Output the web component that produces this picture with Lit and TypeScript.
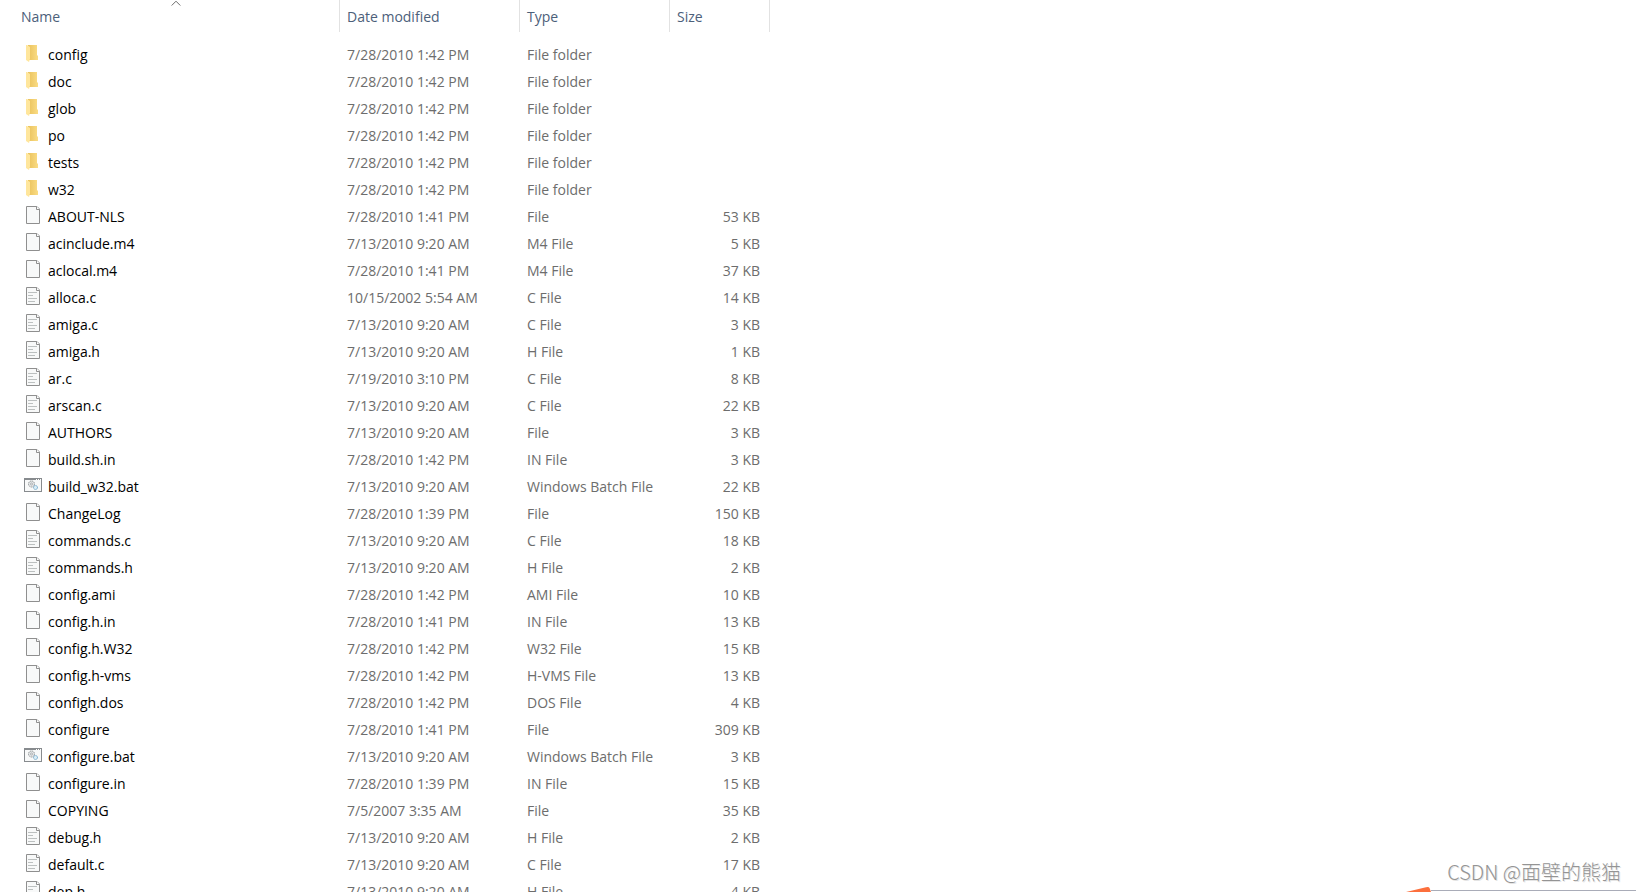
import { LitElement, html, css, svg } from "lit";
import { customElement, property, state } from "lit/decorators.js";

type Kind = "folder" | "blank" | "text" | "batch";
interface Entry { name: string; date: string; type: string; size: string; kind: Kind; }

const entry = (name: string, date: string, type: string, size = "", kind: Kind = "blank"): Entry =>
  ({ name, date, type, size, kind });
const folder = (name: string) => entry(name, "7/28/2010 1:42 PM", "File folder", "", "folder");

const entries: Entry[] = [
  ...["config", "doc", "glob", "po", "tests", "w32"].map(folder),
  entry("ABOUT-NLS", "7/28/2010 1:41 PM", "File", "53 KB"),
  entry("acinclude.m4", "7/13/2010 9:20 AM", "M4 File", "5 KB"),
  entry("aclocal.m4", "7/28/2010 1:41 PM", "M4 File", "37 KB"),
  entry("alloca.c", "10/15/2002 5:54 AM", "C File", "14 KB", "text"),
  entry("amiga.c", "7/13/2010 9:20 AM", "C File", "3 KB", "text"),
  entry("amiga.h", "7/13/2010 9:20 AM", "H File", "1 KB", "text"),
  entry("ar.c", "7/19/2010 3:10 PM", "C File", "8 KB", "text"),
  entry("arscan.c", "7/13/2010 9:20 AM", "C File", "22 KB", "text"),
  entry("AUTHORS", "7/13/2010 9:20 AM", "File", "3 KB"),
  entry("build.sh.in", "7/28/2010 1:42 PM", "IN File", "3 KB"),
  entry("build_w32.bat", "7/13/2010 9:20 AM", "Windows Batch File", "22 KB", "batch"),
  entry("ChangeLog", "7/28/2010 1:39 PM", "File", "150 KB"),
  entry("commands.c", "7/13/2010 9:20 AM", "C File", "18 KB", "text"),
  entry("commands.h", "7/13/2010 9:20 AM", "H File", "2 KB", "text"),
  entry("config.ami", "7/28/2010 1:42 PM", "AMI File", "10 KB"),
  entry("config.h.in", "7/28/2010 1:41 PM", "IN File", "13 KB"),
  entry("config.h.W32", "7/28/2010 1:42 PM", "W32 File", "15 KB"),
  entry("config.h-vms", "7/28/2010 1:42 PM", "H-VMS File", "13 KB"),
  entry("configh.dos", "7/28/2010 1:42 PM", "DOS File", "4 KB"),
  entry("configure", "7/28/2010 1:41 PM", "File", "309 KB"),
  entry("configure.bat", "7/13/2010 9:20 AM", "Windows Batch File", "3 KB", "batch"),
  entry("configure.in", "7/28/2010 1:39 PM", "IN File", "15 KB"),
  entry("COPYING", "7/5/2007 3:35 AM", "File", "35 KB"),
  entry("debug.h", "7/13/2010 9:20 AM", "H File", "2 KB", "text"),
  entry("default.c", "7/13/2010 9:20 AM", "C File", "17 KB", "text"),
  entry("dep.h", "7/13/2010 9:20 AM", "H File", "4 KB", "text"),
];

const page = svg`
  <path d="M2.5 .5H13L15.500 3V17.500H2.500Z" fill="#f8f9f9" stroke="#8f8f8f"/>
  <path d="M12.500 .500V3.500H15.500" fill="#fff" stroke="#8f8f8f"/>`;

const glyphs: Record<Kind, unknown> = {
  folder: svg`
    <defs><linearGradient id="back"><stop offset="0" stop-color="#eac25c"/><stop offset="1" stop-color="#fadc85"/></linearGradient></defs>
    <path d="M4 1H13V11L14 12V16H4Z" fill="url(#back)"/>
    <path d="M2 1H3L6 3V14.500L5 18L2 16Z" fill="#ffe69c"/>`,
  blank: page,
  text: svg`${page}
    <path d="M4 5.500H13M4 8.500H9M4 11.500H13M4 14.500H11" stroke="#bcc0c0" fill="none"/>`,
  batch: svg`
    <rect x=".5" y="2.500" width="17" height="13" fill="#f8f9f9" stroke="#878b8e"/>
    <path d="M1 3.500H17" stroke="#878b8e"/>
    <path d="M12 3.500H13M14 3.500H15M16 3.500H17" stroke="#fff"/>
    <circle cx="7.500" cy="8" r="3" fill="#e4e6e7" stroke="#8f9497" stroke-dasharray="1.400 .6"/>
    <circle cx="7.500" cy="8" r="1" fill="#fff" stroke="#8f9497" stroke-width=".7"/>
    <circle cx="11.500" cy="11.500" r="2" fill="#d9edf7" stroke="#6fa6c8" stroke-dasharray="1.200 .5"/>`,
};

@customElement("file-icon")
export class FileIcon extends LitElement {
  @property() kind: Kind = "blank";
  static styles = css`
    :host { display: block; flex: none; }
    svg { display: block; }
  `;
  render() {
    return html`<svg width="20" height="21" viewBox="0 0 20 21" aria-hidden="true">${glyphs[this.kind]}</svg>`;
  }
}

@customElement("app-root")
export class AppRoot extends LitElement {
  @state() private descending = false;

  static styles = css`
    :host {
      display: block;
      position: relative;
      height: 100vh;
      overflow: hidden;
      background: #fff;
      font-family: "Open Sans", "Noto Sans", sans-serif;
      font-size: 14px;
      line-height: 20px;
      color: #6d6d6d;
    }
    .files {
      table-layout: fixed;
      border-collapse: separate;
      border-spacing: 0;
      width: 758px;
      margin-left: 12px;
    }
    .files tbody::before { content: ""; display: block; height: 9px; }
    .name-col { width: 328px; }
    .date-col { width: 180px; }
    .type-col { width: 150px; }
    .size-col { width: 100px; }
    th {
      position: relative;
      height: 32px;
      padding: 0;
      border-right: 1px solid #e2e2e2;
      box-sizing: border-box;
    }
    .head {
      display: block;
      width: 100%;
      height: 32px;
      padding: 2px 7px 0;
      border: 0;
      background: none;
      font: inherit;
      font-weight: 400;
      text-align: left;
      color: #4c607a;
    }
    .name-col .head { padding-left: 9px; }
    .arrow { position: absolute; top: 0; left: 50%; margin-left: -5px; }
    .arrow.down { transform: scaleY(-1); }
    td {
      height: 27px;
      padding: 0 7px;
      white-space: nowrap;
    }
    .name { display: flex; align-items: center; gap: 4px; height: 27px; padding-left: 5px; color: #000; }
    .size { text-align: right; padding-right: 10px; }
    .mark {
      position: absolute;
      right: 15px;
      bottom: 6px;
      font: 20px/28px "Noto Sans CJK SC", sans-serif;
      font-weight: 300;
      color: #949494;
      text-shadow: 1px 1px 0 #e4e4e4;
    }
    .corner {
      position: absolute;
      right: 0;
      bottom: 0;
      display: flex;
      align-items: flex-start;
    }
    .corner svg { display: block; }
    .rule { width: 205px; height: 1px; margin-top: 3px; background: #a9acb8; }
  `;

  private head(label: string, cls: string) {
    const sorted = cls === "name-col";
    return html`<th class=${cls} scope="col">
      <button class="head" @click=${() => { if (sorted) this.descending = !this.descending; }}>${label}</button>
      ${sorted ? html`<svg class="arrow ${this.descending ? "down" : ""}" width="10" height="7" viewBox="0 0 10 7" aria-hidden="true">
        <path d="M.7 5.500L5 1.200L9.300 5.500" fill="none" stroke="#6b6b6b"/></svg>` : ""}
    </th>`;
  }

  render() {
    const rows = this.descending ? [...entries].reverse() : entries;
    return html`
      <table class="files">
        <thead><tr>
          ${this.head("Name", "name-col")}
          ${this.head("Date modified", "date-col")}
          ${this.head("Type", "type-col")}
          ${this.head("Size", "size-col")}
        </tr></thead>
        <tbody>
          ${rows.map((e) => html`<tr>
            <td><div class="name"><file-icon .kind=${e.kind}></file-icon>${e.name}</div></td>
            <td>${e.date}</td>
            <td>${e.type}</td>
            <td class="size">${e.size}</td>
          </tr>`)}
        </tbody>
      </table>
      <div class="mark">CSDN @面壁的熊猫</div>
      <div class="corner" aria-hidden="true">
        <svg width="25" height="5" viewBox="0 0 25 5"><path d="M0 5L20 .3Q23 -.3 23.500 1L25 5Z" fill="#fc6f3c"/></svg>
        <div class="rule"></div>
      </div>
    `;
  }
}
